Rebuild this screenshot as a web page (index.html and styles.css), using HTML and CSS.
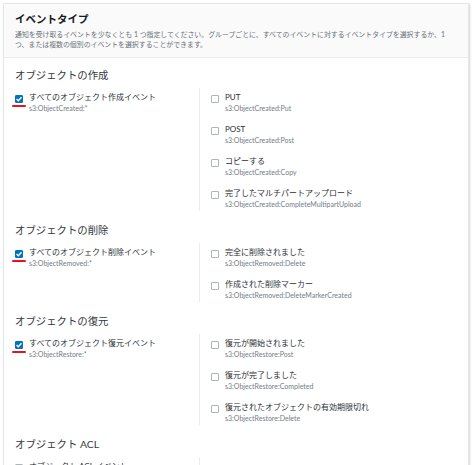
FILE: index.html
```html
<!DOCTYPE html>
<html lang="ja">
<head>
<meta charset="utf-8">
<link rel="stylesheet" href="styles.css">
</head>
<body>
<div class="panel">
  <div class="head">
    <h2 class="title">イベントタイプ</h2>
    <p class="desc">通知を受け取るイベントを少なくとも 1 つ指定してください。グループごとに、すべてのイベントに対するイベントタイプを選択するか、1<br>つ、または複数の個別のイベントを選択することができます。</p>
  </div>
  <div class="body">
    <section class="group">
      <h3 class="gh">オブジェクトの作成</h3>
      <div class="cols">
        <div class="col">
          <div class="item"><span class="cb on"><svg viewBox="0 0 8 8"><path d="M1.6 4.1 L3.3 5.7 L6.5 2.3"/></svg></span><div class="txt"><div class="lbl">すべてのオブジェクト作成イベント</div><div class="sub">s3:ObjectCreated:*</div></div></div>
        </div>
        <div class="col right">
          <div class="item"><span class="cb"></span><div class="txt"><div class="lbl">PUT</div><div class="sub">s3:ObjectCreated:Put</div></div></div>
          <div class="item"><span class="cb"></span><div class="txt"><div class="lbl">POST</div><div class="sub">s3:ObjectCreated:Post</div></div></div>
          <div class="item"><span class="cb"></span><div class="txt"><div class="lbl">コピーする</div><div class="sub">s3:ObjectCreated:Copy</div></div></div>
          <div class="item"><span class="cb"></span><div class="txt"><div class="lbl">完了したマルチパートアップロード</div><div class="sub">s3:ObjectCreated:CompleteMultipartUpload</div></div></div>
        </div>
      </div>
    </section>
    <section class="group">
      <h3 class="gh">オブジェクトの削除</h3>
      <div class="cols">
        <div class="col">
          <div class="item"><span class="cb on"><svg viewBox="0 0 8 8"><path d="M1.6 4.1 L3.3 5.7 L6.5 2.3"/></svg></span><div class="txt"><div class="lbl">すべてのオブジェクト削除イベント</div><div class="sub">s3:ObjectRemoved:*</div></div></div>
        </div>
        <div class="col right">
          <div class="item"><span class="cb"></span><div class="txt"><div class="lbl">完全に削除されました</div><div class="sub">s3:ObjectRemoved:Delete</div></div></div>
          <div class="item"><span class="cb"></span><div class="txt"><div class="lbl">作成された削除マーカー</div><div class="sub">s3:ObjectRemoved:DeleteMarkerCreated</div></div></div>
        </div>
      </div>
    </section>
    <section class="group">
      <h3 class="gh">オブジェクトの復元</h3>
      <div class="cols">
        <div class="col">
          <div class="item"><span class="cb on"><svg viewBox="0 0 8 8"><path d="M1.6 4.1 L3.3 5.7 L6.5 2.3"/></svg></span><div class="txt"><div class="lbl">すべてのオブジェクト復元イベント</div><div class="sub">s3:ObjectRestore:*</div></div></div>
        </div>
        <div class="col right">
          <div class="item"><span class="cb"></span><div class="txt"><div class="lbl">復元が開始されました</div><div class="sub">s3:ObjectRestore:Post</div></div></div>
          <div class="item"><span class="cb"></span><div class="txt"><div class="lbl">復元が完了しました</div><div class="sub">s3:ObjectRestore:Completed</div></div></div>
          <div class="item"><span class="cb"></span><div class="txt"><div class="lbl">復元されたオブジェクトの有効期限切れ</div><div class="sub">s3:ObjectRestore:Delete</div></div></div>
        </div>
      </div>
    </section>
    <section class="group">
      <h3 class="gh">オブジェクト ACL</h3>
      <div class="cols">
        <div class="col">
          <div class="item"><span class="cb"></span><div class="txt"><div class="lbl">オブジェクト ACL イベント</div><div class="sub">s3:ObjectAcl:Put</div></div></div>
        </div>
        <div class="col right"></div>
      </div>
    </section>
  </div>
</div>
</body>
</html>
```

FILE: styles.css
```css
html, body {
  margin: 0;
  padding: 0;
  background: #ffffff;
  height: 465px;
  overflow: hidden;
}
body {
  padding: 3px 0 0 3px;
  font-family: Lato, "Noto Sans CJK JP", sans-serif;
  color: #16191f;
}
.panel {
  width: 466px;
  box-sizing: border-box;
  border: 1px solid #e4e7e7;
  background: #fff;
  box-shadow: 1px 1px 2px rgba(0, 28, 36, 0.18);
  min-height: 600px;
}
.head {
  background: #fafafa;
  border-bottom: 1px solid #eaeded;
  padding: 8px 11px 8px 11px;
}
.title {
  margin: 0;
  font-size: 10.5px;
  line-height: 14px;
  font-weight: 700;
  color: #16191f;
}
.desc {
  margin: 3px 0 0 0;
  font-size: 6.9px;
  line-height: 10px;
  color: #687078;
}
.body {
  padding: 10px 11px 0 11px;
}
.group {
  padding-bottom: 12px;
}
.gh {
  margin: 0;
  font-size: 10.4px;
  line-height: 14px;
  font-weight: 400;
  color: #333a40;
}
.cols {
  margin-top: 6px;
  display: grid;
  grid-template-columns: 184px 1fr;
}
.col {
  padding: 4px 0 2px 0;
  display: flex;
  flex-direction: column;
  gap: 11px;
}
.col.right {
  border-left: 1px solid #eaeded;
  padding-left: 11px;
}
.item {
  display: flex;
  align-items: flex-start;
  gap: 6px;
}
.cb {
  position: relative;
  flex: none;
  width: 8px;
  height: 8px;
  box-sizing: border-box;
  border: 1px solid #aab7b8;
  border-radius: 1px;
  background: #fff;
  margin-top: 3px;
}
.cb.on {
  background: #0073bb;
  border-color: #0073bb;
}
.cb.on svg {
  position: absolute;
  left: -1px;
  top: -1px;
  width: 8px;
  height: 8px;
}
.cb.on svg path {
  fill: none;
  stroke: #fff;
  stroke-width: 1.4;
}
.cb.on::after {
  content: "";
  position: absolute;
  left: -4px;
  top: 9px;
  width: 14px;
  height: 2px;
  background: #e8141a;
  border-radius: 1px;
}
.lbl {
  font-size: 8px;
  line-height: 11px;
  color: #2a2f35;
}
.sub {
  font-size: 7px;
  line-height: 10px;
  color: #737c85;
}
```
